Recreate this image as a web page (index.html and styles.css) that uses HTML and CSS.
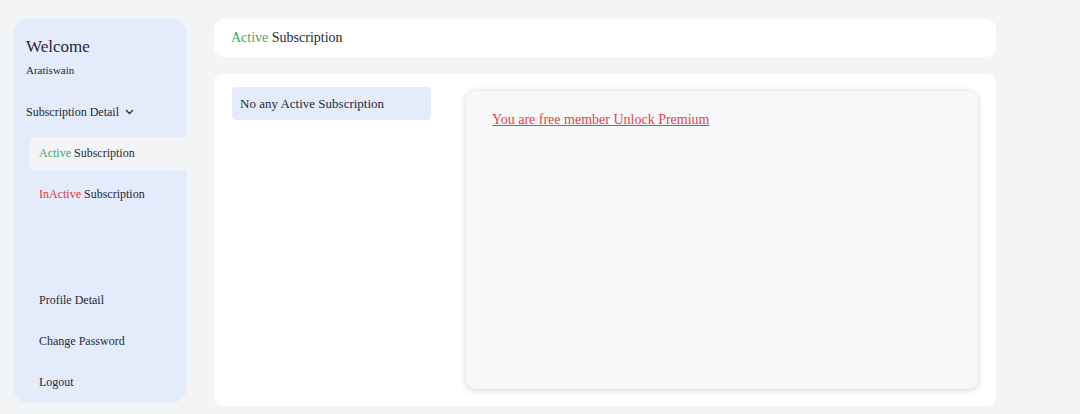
FILE: index.html
```html
<!DOCTYPE html>
<html lang="en">
<head>
    <meta charset="UTF-8">
    <meta name="viewport" content="width=device-width, initial-scale=1.0">
    <title>Active Subscription</title>
    <link rel="stylesheet" href="styles.css">
</head>
<body>
    <div class="layout">
        <aside class="sidebar">
            <h2 class="welcome">Welcome</h2>
            <div class="username">Aratiswain</div>

            <div class="menu-title">
                Subscription Detail
                <svg class="chevron" width="9" height="6" viewBox="0 0 9 6">
                    <path d="M1 1l3.5 3.5L8 1" fill="none" stroke="#333" stroke-width="1.4"/>
                </svg>
            </div>
            <ul class="menu">
                <li class="menu-item selected"><span class="green">Active</span> Subscription</li>
                <li class="menu-item"><span class="red">InActive</span> Subscription</li>
            </ul>

            <ul class="menu bottom">
                <li class="menu-item">Profile Detail</li>
                <li class="menu-item">Change Password</li>
                <li class="menu-item">Logout</li>
            </ul>
        </aside>

        <main class="content">
            <div class="topbar"><span class="green">Active</span> Subscription</div>
            <div class="panel">
                <div class="notice">No any Active Subscription</div>
                <div class="premium">
                    <a href="#" class="premium-link">You are free member Unlock Premium</a>
                </div>
            </div>
        </main>
    </div>
</body>
</html>
```

FILE: styles.css
```css
body {
    margin: 0;
    background: #f3f4f6;
    color: #1f2937;
    font-family: "Liberation Serif", "Times New Roman", serif;
}

.layout {
    display: flex;
    gap: 27px;
    padding: 18px 13px;
}

.sidebar {
    width: 174px;
    height: 385px;
    box-sizing: border-box;
    background: #e4ebfb;
    border-radius: 16px;
    padding: 19px 0 4px 13px;
    display: flex;
    flex-direction: column;
}

.welcome {
    margin: 0;
    font-size: 17px;
    font-weight: normal;
    line-height: 20px;
}

.username {
    margin-top: 6px;
    font-size: 11px;
    line-height: 14px;
}

.menu-title {
    margin-top: 27px;
    font-size: 12px;
    line-height: 16px;
    display: flex;
    align-items: center;
    gap: 6px;
}

.menu {
    list-style: none;
    margin: 17px 0 0 4px;
    padding: 0;
}

.menu-item {
    height: 33px;
    line-height: 33px;
    padding-left: 9px;
    margin-bottom: 7px;
    font-size: 12px;
}

.menu-item.selected {
    background: #f3f4f6;
    border-radius: 4px 0 0 4px;
    margin-bottom: 8px;
}

.menu.bottom {
    margin-top: auto;
}

.menu.bottom .menu-item {
    margin-bottom: 8px;
}

.menu.bottom .menu-item:last-child {
    margin-bottom: 0;
}

.green {
    color: #43a85a;
}

.red {
    color: #e5383b;
}

.content {
    width: 782px;
    margin-top: 1px;
    display: flex;
    flex-direction: column;
    gap: 17px;
}

.topbar {
    height: 38px;
    line-height: 38px;
    background: #fff;
    border-radius: 10px;
    padding-left: 17px;
    font-size: 14px;
}

.panel {
    height: 332px;
    box-sizing: border-box;
    background: #fff;
    border-radius: 8px;
    padding: 13px 18px 17px;
    display: flex;
    gap: 35px;
}

.notice {
    width: 199px;
    height: 33px;
    line-height: 33px;
    box-sizing: border-box;
    padding-left: 8px;
    background: #e4ebfb;
    border-radius: 4px;
    font-size: 13px;
}

.premium {
    flex: 1;
    margin-top: 4px;
    background: #f7f8fa;
    border-radius: 9px;
    box-shadow: 0 1px 7px rgba(0, 0, 0, 0.18);
    padding: 19px 26px;
}

.premium-link {
    color: #e0434c;
    font-size: 14px;
    line-height: 16px;
}
```
